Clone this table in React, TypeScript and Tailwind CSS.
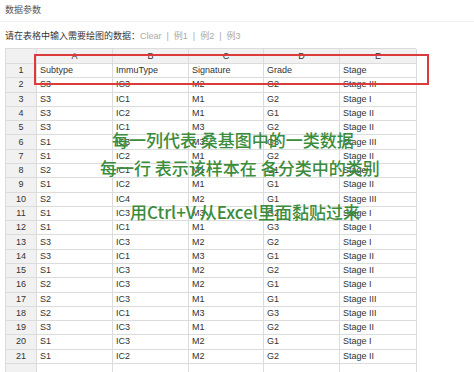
const cols = ["A", "B", "C", "D", "E"];

const rows: string[][] = [
  ["Subtype", "ImmuType", "Signature", "Grade", "Stage"],
  ["S3", "IC3", "M2", "G2", "Stage III"],
  ["S3", "IC1", "M1", "G2", "Stage I"],
  ["S3", "IC2", "M1", "G1", "Stage II"],
  ["S3", "IC1", "M3", "G2", "Stage II"],
  ["S1", "IC3", "M3", "G3", "Stage III"],
  ["S1", "IC2", "M1", "G2", "Stage II"],
  ["S2", "IC1", "M1", "G1", "Stage I"],
  ["S1", "IC2", "M1", "G1", "Stage II"],
  ["S2", "IC4", "M2", "G1", "Stage III"],
  ["S1", "IC3", "M3", "G2", "Stage I"],
  ["S1", "IC1", "M1", "G3", "Stage I"],
  ["S3", "IC3", "M2", "G2", "Stage I"],
  ["S3", "IC1", "M3", "G1", "Stage II"],
  ["S1", "IC3", "M2", "G2", "Stage II"],
  ["S2", "IC3", "M2", "G1", "Stage I"],
  ["S2", "IC3", "M1", "G1", "Stage III"],
  ["S2", "IC1", "M3", "G3", "Stage III"],
  ["S3", "IC3", "M1", "G2", "Stage II"],
  ["S1", "IC3", "M2", "G1", "Stage I"],
  ["S1", "IC2", "M2", "G2", "Stage II"],
  ["", "", "", "", ""],
];

export default function App() {
  return (
    <div className="relative w-[474px] h-[372px] overflow-hidden bg-white font-['Liberation_Sans','Noto_Sans_CJK_SC',sans-serif] text-[9px] text-[#333]">
      {/* panel title */}
      <div className="h-[22px] px-[5px] pt-[4px] leading-[12px] text-[#555] border-b border-[#f0f0f0]">数据参数</div>

      <div className="px-[5px] mt-[8px] mb-[6px] leading-[12px] flex">
        <span>请在表格中输入需要绘图的数据：</span>
        <span className="text-[#aaa]">Clear&nbsp;&nbsp;|&nbsp;&nbsp;例1&nbsp;&nbsp;|&nbsp;&nbsp;例2&nbsp;&nbsp;|&nbsp;&nbsp;例3</span>
      </div>

      {/* spreadsheet */}
      <div className="ml-[5px] w-[411px] grid grid-cols-[31px_76px_76px_75px_76px_77px] grid-rows-[15px] auto-rows-[14.29px] border-l border-t border-[#dcdcdc]">
        <div className="bg-[#f1f1f1] border-r border-b border-[#dcdcdc]" />
        {cols.map((c) => (
          <div key={c} className="bg-[#f1f1f1] border-r border-b border-[#dcdcdc] flex items-center justify-center leading-none">
            {c}
          </div>
        ))}
        {rows.map((r, i) => (
          <div key={i} className="contents">
            <div className="bg-[#f1f1f1] border-r border-b border-[#dcdcdc] flex items-center justify-center leading-none">
              {i === rows.length - 1 ? "" : i + 1}
            </div>
            {r.map((v, j) => (
              <div key={j} className="border-r border-b border-[#dcdcdc] flex items-center pl-[3px] leading-none">
                {v}
              </div>
            ))}
          </div>
        ))}
      </div>

      {/* highlight around header row */}
      <div className="absolute left-[34px] top-[54px] w-[395px] h-[31px] border-2 border-[#dc3b3b]" />

      {/* annotation overlay */}
      <div className="absolute left-[112px] top-[130px] text-[17px] leading-[20px] font-medium text-[#3b8c3b] whitespace-pre font-['Noto_Sans_CJK_SC',sans-serif]">
        每一列代表 桑基图中的一类数据
      </div>
      <div className="absolute left-[100px] top-[158px] text-[17px] leading-[20px] font-medium text-[#3b8c3b] whitespace-pre font-['Noto_Sans_CJK_SC',sans-serif]">
        每一行 表示该样本在 各分类中的类别
      </div>
      <div className="absolute left-[130px] top-[202px] text-[17px] leading-[20px] font-medium text-[#3b8c3b] whitespace-pre font-['Noto_Sans_CJK_SC',sans-serif]">
        用Ctrl+V 从Excel里面黏贴过来
      </div>
    </div>
  );
}
